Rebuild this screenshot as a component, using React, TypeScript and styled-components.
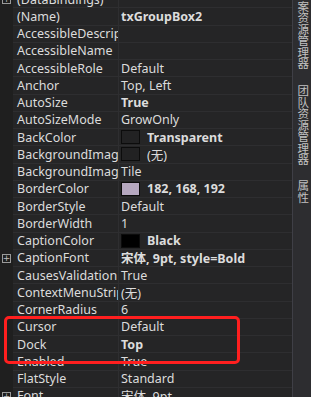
import styled, { createGlobalStyle } from "styled-components";

const GlobalStyle = createGlobalStyle`
  html, body {
    margin: 0;
    padding: 0;
    background: #252526;
  }
  body {
    font-family: "Noto Sans", "Noto Sans CJK SC", sans-serif;
  }
`;

type Prop = {
  name: string;
  value?: string;
  bold?: boolean;
  swatch?: string;
  expandable?: boolean;
};

const props: Prop[] = [
  { name: "(DataBindings)", expandable: true },
  { name: "(Name)", value: "txGroupBox2", bold: true },
  { name: "AccessibleDescription" },
  { name: "AccessibleName" },
  { name: "AccessibleRole", value: "Default" },
  { name: "Anchor", value: "Top, Left" },
  { name: "AutoSize", value: "True", bold: true },
  { name: "AutoSizeMode", value: "GrowOnly" },
  { name: "BackColor", value: "Transparent", bold: true, swatch: "#222223" },
  { name: "BackgroundImage", value: "(无)", swatch: "#222223" },
  { name: "BackgroundImageLayout", value: "Tile" },
  { name: "BorderColor", value: "182, 168, 192", bold: true, swatch: "#b6a8c0" },
  { name: "BorderStyle", value: "Default" },
  { name: "BorderWidth", value: "1" },
  { name: "CaptionColor", value: "Black", bold: true, swatch: "#000000" },
  { name: "CaptionFont", value: "宋体, 9pt, style=Bold", bold: true, expandable: true },
  { name: "CausesValidation", value: "True" },
  { name: "ContextMenuStrip", value: "(无)" },
  { name: "CornerRadius", value: "6" },
  { name: "Cursor", value: "Default" },
  { name: "Dock", value: "Top", bold: true },
  { name: "Enabled", value: "True" },
  { name: "FlatStyle", value: "Standard" },
  { name: "Font", value: "宋体, 9pt", expandable: true },
];

const tabs = ["解决方案资源管理器", "团队资源管理器", "属性"];

export default function App() {
  return (
    <>
      <GlobalStyle />
      <Page>
        <Grid>
          <List>
            {props.map((p) => (
              <Row key={p.name}>
                <Gutter>{p.expandable && <Expander>+</Expander>}</Gutter>
                <Name>{p.name}</Name>
                <Value $bold={p.bold}>
                  {p.swatch && <Swatch $color={p.swatch} />}
                  {p.value}
                </Value>
              </Row>
            ))}
          </List>
          <Highlight />
        </Grid>
        <SideStrip>
          {tabs.map((t) => (
            <Tab key={t}>{t}</Tab>
          ))}
        </SideStrip>
      </Page>
    </>
  );
}

const Page = styled.div`
  display: flex;
  width: 311px;
  height: 397px;
  overflow: hidden;
  background: #252526;
`;

const Grid = styled.div`
  position: relative;
  flex: 1;
  overflow: hidden;
  background: #252526;
`;

const List = styled.div`
  display: flex;
  flex-direction: column;
  margin-top: -9px;
`;

const Row = styled.div`
  display: grid;
  grid-template-columns: 13px 106px 1fr;
  height: 17.25px;
  font-size: 12.5px;
  color: #dcdcdc;
`;

const Gutter = styled.div`
  display: flex;
  align-items: center;
  justify-content: center;
  background: #1f1f1f;
`;

const Expander = styled.span`
  display: flex;
  align-items: center;
  justify-content: center;
  width: 7px;
  height: 7px;
  border: 1px solid #9a9a9a;
  color: #bdbdbd;
  font-size: 9px;
  line-height: 1;
  font-family: "DejaVu Sans", sans-serif;
`;

const Name = styled.div`
  display: flex;
  align-items: center;
  padding-left: 4px;
  overflow: hidden;
  white-space: nowrap;
  border-bottom: 1px solid #2e2e30;
  border-right: 1px solid #2e2e30;
  box-sizing: border-box;
`;

const Value = styled.div<{ $bold?: boolean }>`
  display: flex;
  align-items: center;
  padding-left: 2px;
  overflow: hidden;
  white-space: nowrap;
  font-weight: ${(p) => (p.$bold ? 700 : 400)};
  border-bottom: 1px solid #2e2e30;
  box-sizing: border-box;
`;

const Swatch = styled.span<{ $color: string }>`
  width: 19px;
  height: 14px;
  margin-right: 7px;
  background: ${(p) => p.$color};
  border: 1px solid #0c0c0c;
  box-sizing: border-box;
  flex-shrink: 0;
`;

const Highlight = styled.div`
  position: absolute;
  left: 4px;
  top: 316px;
  width: 236px;
  height: 48px;
  border: 3px solid #ff1f1f;
  border-radius: 5px;
  box-sizing: border-box;
  pointer-events: none;
`;

const SideStrip = styled.div`
  display: flex;
  flex-direction: column;
  align-items: center;
  gap: 15px;
  width: 17px;
  margin-top: -34px;
  padding-left: 1px;
  background: #2d2d30;
  border-left: 1px solid #3f3f46;
  flex-shrink: 0;
`;

const Tab = styled.div`
  writing-mode: vertical-rl;
  font-family: "Noto Sans CJK SC", sans-serif;
  font-size: 11.5px;
  line-height: 1;
  color: #c2c2c2;
`;
